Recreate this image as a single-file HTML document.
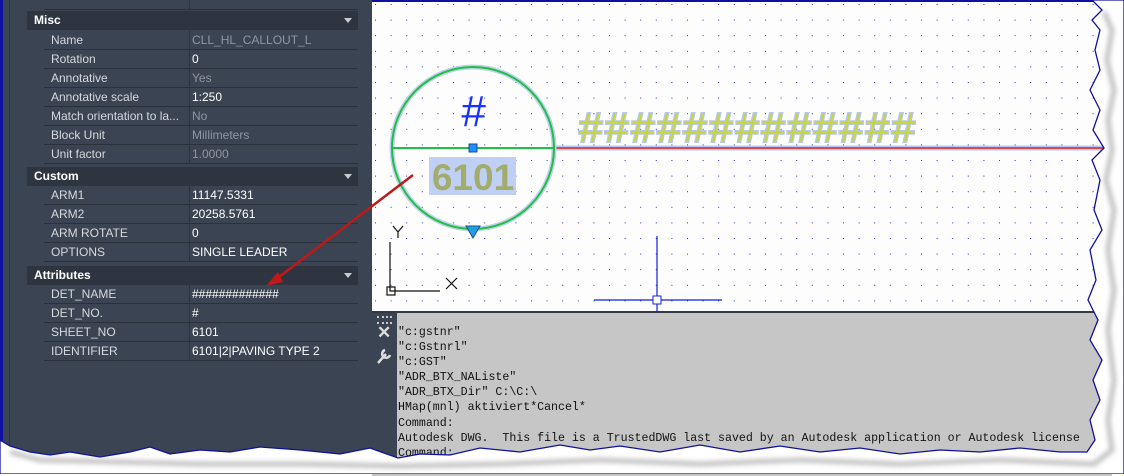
<!DOCTYPE html>
<html><head><meta charset="utf-8"><style>
body{margin:0;width:1124px;height:474px;overflow:hidden;background:#fff;position:relative;font-family:"Liberation Sans",sans-serif}
#panel{position:absolute;left:0;top:0;width:372px;height:474px;background:#3b4452}
#panel .lb{position:absolute;left:0;top:0;width:3px;height:474px;background:#1010a0}
#panel .ln{position:absolute;left:9px;top:0;width:1px;height:474px;background:#2c333e}
.hdr{position:absolute;left:27px;width:331px;height:19px;background:#2e3540;color:#fff;font-weight:bold;font-size:12px;line-height:19px;text-indent:7px}
.hdr:after{content:"";position:absolute;right:6px;top:7px;border-left:4px solid transparent;border-right:4px solid transparent;border-top:5px solid #c8ccd2}
.row{position:absolute;left:44px;width:314px;height:18px;border-bottom:1px solid #2a313b;font-size:12px;line-height:19px;color:#d6d9de}
.row span{position:absolute;left:7px}
.row b{font-weight:normal;position:absolute;left:145px;top:0;height:19px;border-left:1px solid #2a313b;padding-left:2px;color:#fff}
.row b.g{color:#8e96a2}
#cmd{position:absolute;left:372px;top:311px;width:740px;height:163px;background:#c6c6c6;border-top:2px solid #333a44}
#tb{position:absolute;left:372px;top:313px;width:25px;height:161px;background:#3b4452}
#cmd pre{margin:0;position:absolute;left:26px;top:12px;font-family:"Liberation Mono",monospace;font-size:11.6px;line-height:15.1px;color:#111}
</style></head><body>
<svg style="position:absolute;left:372px;top:0" width="752" height="311">
<defs><pattern id="d" x="3" y="4" width="15.6" height="15.6" patternUnits="userSpaceOnUse"><rect width="1" height="1" fill="#2030d0"/></pattern></defs>
<rect width="752" height="311" fill="#fdfdfd"/>
<rect width="752" height="311" fill="url(#d)"/>
<rect width="752" height="2" fill="#1010a0"/>
</svg>
<svg style="position:absolute;left:0;top:0" width="1124" height="474">
<line x1="555" y1="148" x2="1104" y2="148" stroke="#b8c8f0" stroke-width="5"/>
<line x1="555" y1="148" x2="1104" y2="148" stroke="#e02020" stroke-width="1.5"/>
<circle cx="473" cy="148" r="81" fill="none" stroke="#c0d0f0" stroke-width="5"/>
<circle cx="473" cy="148" r="81" fill="none" stroke="#20c040" stroke-width="2"/>
<line x1="392" y1="148" x2="555" y2="148" stroke="#20c040" stroke-width="2"/>
<rect x="469" y="144" width="8" height="8" fill="#1e90ff" stroke="#1a4a90"/>
<text x="473" y="126" text-anchor="middle" font-family="Liberation Sans" font-size="44" fill="#1a30ff" font-style="italic">#</text>
<rect x="429" y="157" width="87" height="38" fill="#c0d0f4"/>
<text x="473" y="190" text-anchor="middle" font-family="Liberation Sans" font-weight="bold" font-size="37" fill="#a2ac6c">6101</text>
<polygon points="466,226 480,226 473,238" fill="#20a0e0" stroke="#205080"/>
<text x="579" y="142" font-family="Liberation Sans" font-size="42" fill="#c8d440" stroke="#b8c8ec" stroke-width="2.5" paint-order="stroke" textLength="336" lengthAdjust="spacing">#############</text>
<g stroke="#111" fill="none" stroke-width="1.2">
<path d="M390 242V291H440"/><rect x="387" y="287" width="8" height="8"/>
<path d="M393 226L398 232L403 226M398 232V238"/>
<path d="M446 278L457 289M457 278L446 289"/>
</g>
<g stroke="#1020e0" stroke-width="1.2"><line x1="657" y1="236" x2="657" y2="311"/><line x1="594" y1="300" x2="722" y2="300"/></g>
<rect x="653" y="296" width="8" height="8" fill="#fff" stroke="#1020e0"/>
</svg>
<div id="panel"><div class="lb"></div><div class="ln"></div>
<div class="row" style="top:0;height:9px"><b style="height:9px"></b></div>
<div class="hdr" style="top:11px">Misc</div>
<div class="row" style="top:31px"><span>Name</span><b class="g">CLL_HL_CALLOUT_L</b></div>
<div class="row" style="top:50px"><span>Rotation</span><b>0</b></div>
<div class="row" style="top:69px"><span>Annotative</span><b class="g">Yes</b></div>
<div class="row" style="top:88px"><span>Annotative scale</span><b>1:250</b></div>
<div class="row" style="top:107px"><span>Match orientation to la...</span><b class="g">No</b></div>
<div class="row" style="top:126px"><span>Block Unit</span><b class="g">Millimeters</b></div>
<div class="row" style="top:145px"><span>Unit factor</span><b class="g">1.0000</b></div>
<div class="hdr" style="top:167px">Custom</div>
<div class="row" style="top:186px"><span>ARM1</span><b>11147.5331</b></div>
<div class="row" style="top:205px"><span>ARM2</span><b>20258.5761</b></div>
<div class="row" style="top:224px"><span>ARM ROTATE</span><b>0</b></div>
<div class="row" style="top:243px"><span>OPTIONS</span><b>SINGLE LEADER</b></div>
<div class="hdr" style="top:266px">Attributes</div>
<div class="row" style="top:285px"><span>DET_NAME</span><b>#############</b></div>
<div class="row" style="top:304px"><span>DET_NO.</span><b>#</b></div>
<div class="row" style="top:323px"><span>SHEET_NO</span><b>6101</b></div>
<div class="row" style="top:342px"><span>IDENTIFIER</span><b>6101|2|PAVING TYPE 2</b></div>
</div>
<div id="cmd"><pre>"c:gstnr"
"c:Gstnrl"
"c:GST"
"ADR_BTX_NAListe"
"ADR_BTX_Dir" C:\C:\
HMap(mnl) aktiviert*Cancel*
Command:
Autodesk DWG.  This file is a TrustedDWG last saved by an Autodesk application or Autodesk license
Command:</pre></div>
<div id="tb">
<div style="position:absolute;left:5px;top:3px;width:15px;height:4px;border-top:2px dotted #ccc;border-bottom:2px dotted #ccc"></div>
<div style="position:absolute;left:5px;top:10px;color:#ddd;font-size:17px;font-weight:bold">✕</div>
<svg style="position:absolute;left:4px;top:34px" width="16" height="18"><path d="M2 16L10 7M9 3a4 4 0 1 0 5 5" stroke="#ddd" stroke-width="2.5" fill="none"/></svg>
</div>
<svg style="position:absolute;left:0;top:0" width="1124" height="474">
<defs><filter id="b"><feGaussianBlur stdDeviation="2.5"/></filter></defs>
<line x1="413" y1="175" x2="275" y2="280" stroke="#c01818" stroke-width="2.5"/>
<polygon points="266,286 278,272 283,282" fill="#c01818"/>
<path d="M1104 12L1112 30L1107 60L1114 90L1108 120L1112 150L1106 180L1114 210L1108 250L1114 290L1108 330L1114 380L1108 420L1112 450L1094 464L1000 460L900 464L800 460L700 464L600 460L500 464L400 466L300 464L200 464L120 462L40 460L10 452" fill="none" stroke="#666" stroke-width="6" opacity="0.55" filter="url(#b)"/>
<path d="M0 474V440L10 446L30 452L50 455L70 452L100 457L130 452L150 447L170 454L200 450L230 452L260 447L300 450L340 454L370 448L398 458L420 454L450 455L480 448L520 452L560 445L590 450L620 446L660 452L700 445L740 452L780 446L820 452L860 448L900 454L940 450L980 452L1020 448L1060 452L1087 452L1095 440L1090 420L1100 400L1093 380L1102 360L1090 340L1098 320L1088 300L1096 280L1090 250L1102 230L1094 210L1100 180L1092 160L1104 148L1093 130L1100 110L1090 90L1100 70L1095 50L1100 30L1092 20L1102 10L1092 0H1124V474Z" fill="#fff" stroke="#1010a0" stroke-width="1.3"/>
<path d="M1104 12L1112 30L1107 60L1114 90L1108 120L1112 150L1106 180L1114 210L1108 250L1114 290L1108 330L1114 380L1108 420L1112 450L1094 464L1000 460L900 464L800 460L700 464L600 460L500 464L400 466L300 464L200 464L120 462L40 460L10 452" fill="none" stroke="#777" stroke-width="5" opacity="0.45" filter="url(#b)"/>
</svg>
</body></html>
